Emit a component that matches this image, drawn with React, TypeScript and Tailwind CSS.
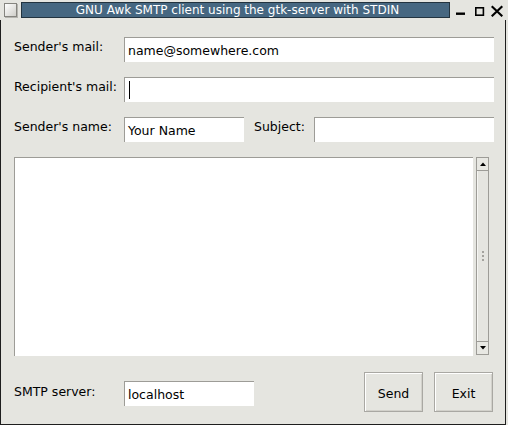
export default function App() {
  const entry = "bg-white border-t border-l border-[#9d9c97] h-[25px] flex items-center pl-[3px] leading-[15px]";
  const btn = "w-[59px] h-[40px] border border-[#a9a8a3] bg-[#e5e5e0] shadow-[inset_1px_1px_0_#ffffff,inset_-1px_-1px_0_#d2d1cb] leading-[15px] pt-[2px]";
  return (
    <div className="w-[508px] h-[425px] bg-[#e5e5e0] flex flex-col font-['DejaVu_Sans',sans-serif] text-[12.5px] text-black overflow-hidden">
      {/* title bar */}
      <div className="h-[20px] shrink-0 flex items-start text-[12px]">
        <div className="ml-[4px] mt-[3px] w-[13px] h-[14px] border border-[#85847f] bg-gradient-to-br from-white to-[#cfcec9] shadow-[1px_1px_0_#b5b4af]" />
        <div className="ml-[4px] mt-[2px] w-[429px] h-[16px] bg-[#466781] border border-[#22333f] text-white flex items-center justify-center leading-none pl-[4px]">
          GNU Awk SMTP client using the gtk-server with STDIN
        </div>
        <svg className="ml-[5px] mt-[5px]" width="12" height="12" viewBox="0 0 12 12">
          <rect x="1" y="7.5" width="9" height="2.4" fill="#000" />
        </svg>
        <svg className="ml-[6px] mt-[5px]" width="12" height="12" viewBox="0 0 12 12">
          <rect x="2.8" y="2.8" width="7.6" height="7.4" fill="none" stroke="#000" strokeWidth="1.6" />
        </svg>
        <svg className="ml-[6px] mt-[5px]" width="12" height="12" viewBox="0 0 12 12">
          <path d="M1.5 2 L10.5 10.5 M10.5 2 L1.5 10.5" stroke="#000" strokeWidth="2.2" strokeLinecap="square" />
        </svg>
      </div>

      {/* body */}
      <div className="w-[506px] flex-1 border-l border-r border-b border-[#1e1e1e] pl-[13px] pr-[11px] pt-[17px] flex flex-col">
        {/* Sender's mail */}
        <div className="flex items-start h-[25px]">
          <div className="w-[110px] mt-[2px] leading-[15px]">Sender's mail:</div>
          <div className={`${entry} flex-1`}>name@somewhere.com</div>
        </div>
        {/* Recipient's mail */}
        <div className="flex items-start h-[25px] mt-[15px]">
          <div className="w-[110px] mt-[2px] leading-[15px]">Recipient's mail:</div>
          <div className={`${entry} flex-1 pl-[4px]`}>
            <div className="w-[1px] h-[18px] bg-black" />
          </div>
        </div>
        {/* Sender's name / Subject */}
        <div className="flex items-start h-[25px] mt-[15px]">
          <div className="w-[110px] mt-[2px] leading-[15px]">Sender's name:</div>
          <div className={`${entry} w-[120px]`}>Your Name</div>
          <div className="w-[70px] pl-[10px] mt-[2px] leading-[15px] whitespace-nowrap">Subject:</div>
          <div className={`${entry} flex-1`}></div>
        </div>
        {/* text area + scrollbar */}
        <div className="flex items-start mt-[15px] h-[199px] pr-[5px]">
          <div className="flex-1 h-[199px] bg-white border-t border-l border-[#9d9c97]" />
          <div className="ml-[3px] w-[13px] h-[198px] border border-[#9d9c97] bg-[#d9d8d2] flex flex-col">
            <div className="h-[13px] shrink-0 border-b border-[#9d9c97] bg-[#e8e8e3] flex items-center justify-center">
              <svg width="6" height="4" viewBox="0 0 6 4"><path d="M0 4 L3 0.5 L6 4 Z" fill="#000" /></svg>
            </div>
            <div className="flex-1 bg-[#e5e5e0] border-l border-[#f6f6f3] flex flex-col items-center justify-center gap-[2px]">
              <div className="w-[2px] h-[2px] bg-[#a3a29d]" />
              <div className="w-[2px] h-[2px] bg-[#a3a29d]" />
              <div className="w-[2px] h-[2px] bg-[#a3a29d]" />
            </div>
            <div className="h-[13px] shrink-0 border-t border-[#9d9c97] bg-[#e8e8e3] flex items-center justify-center">
              <svg width="6" height="4" viewBox="0 0 6 4"><path d="M0 0 L3 3.5 L6 0 Z" fill="#000" /></svg>
            </div>
          </div>
        </div>
        {/* bottom row */}
        <div className="flex items-start mt-[16px] h-[40px]">
          <div className="w-[110px] mt-[12px] leading-[15px]">SMTP server:</div>
          <div className="mt-[9px] w-[130px]">
            <div className={`${entry} w-[130px]`}>localhost</div>
          </div>
          <div className="flex-1" />
          <button className={btn}>Send</button>
          <button className={`${btn} ml-[11px]`}>Exit</button>
          <div className="w-[1px]" />
        </div>
      </div>
    </div>
  );
}
